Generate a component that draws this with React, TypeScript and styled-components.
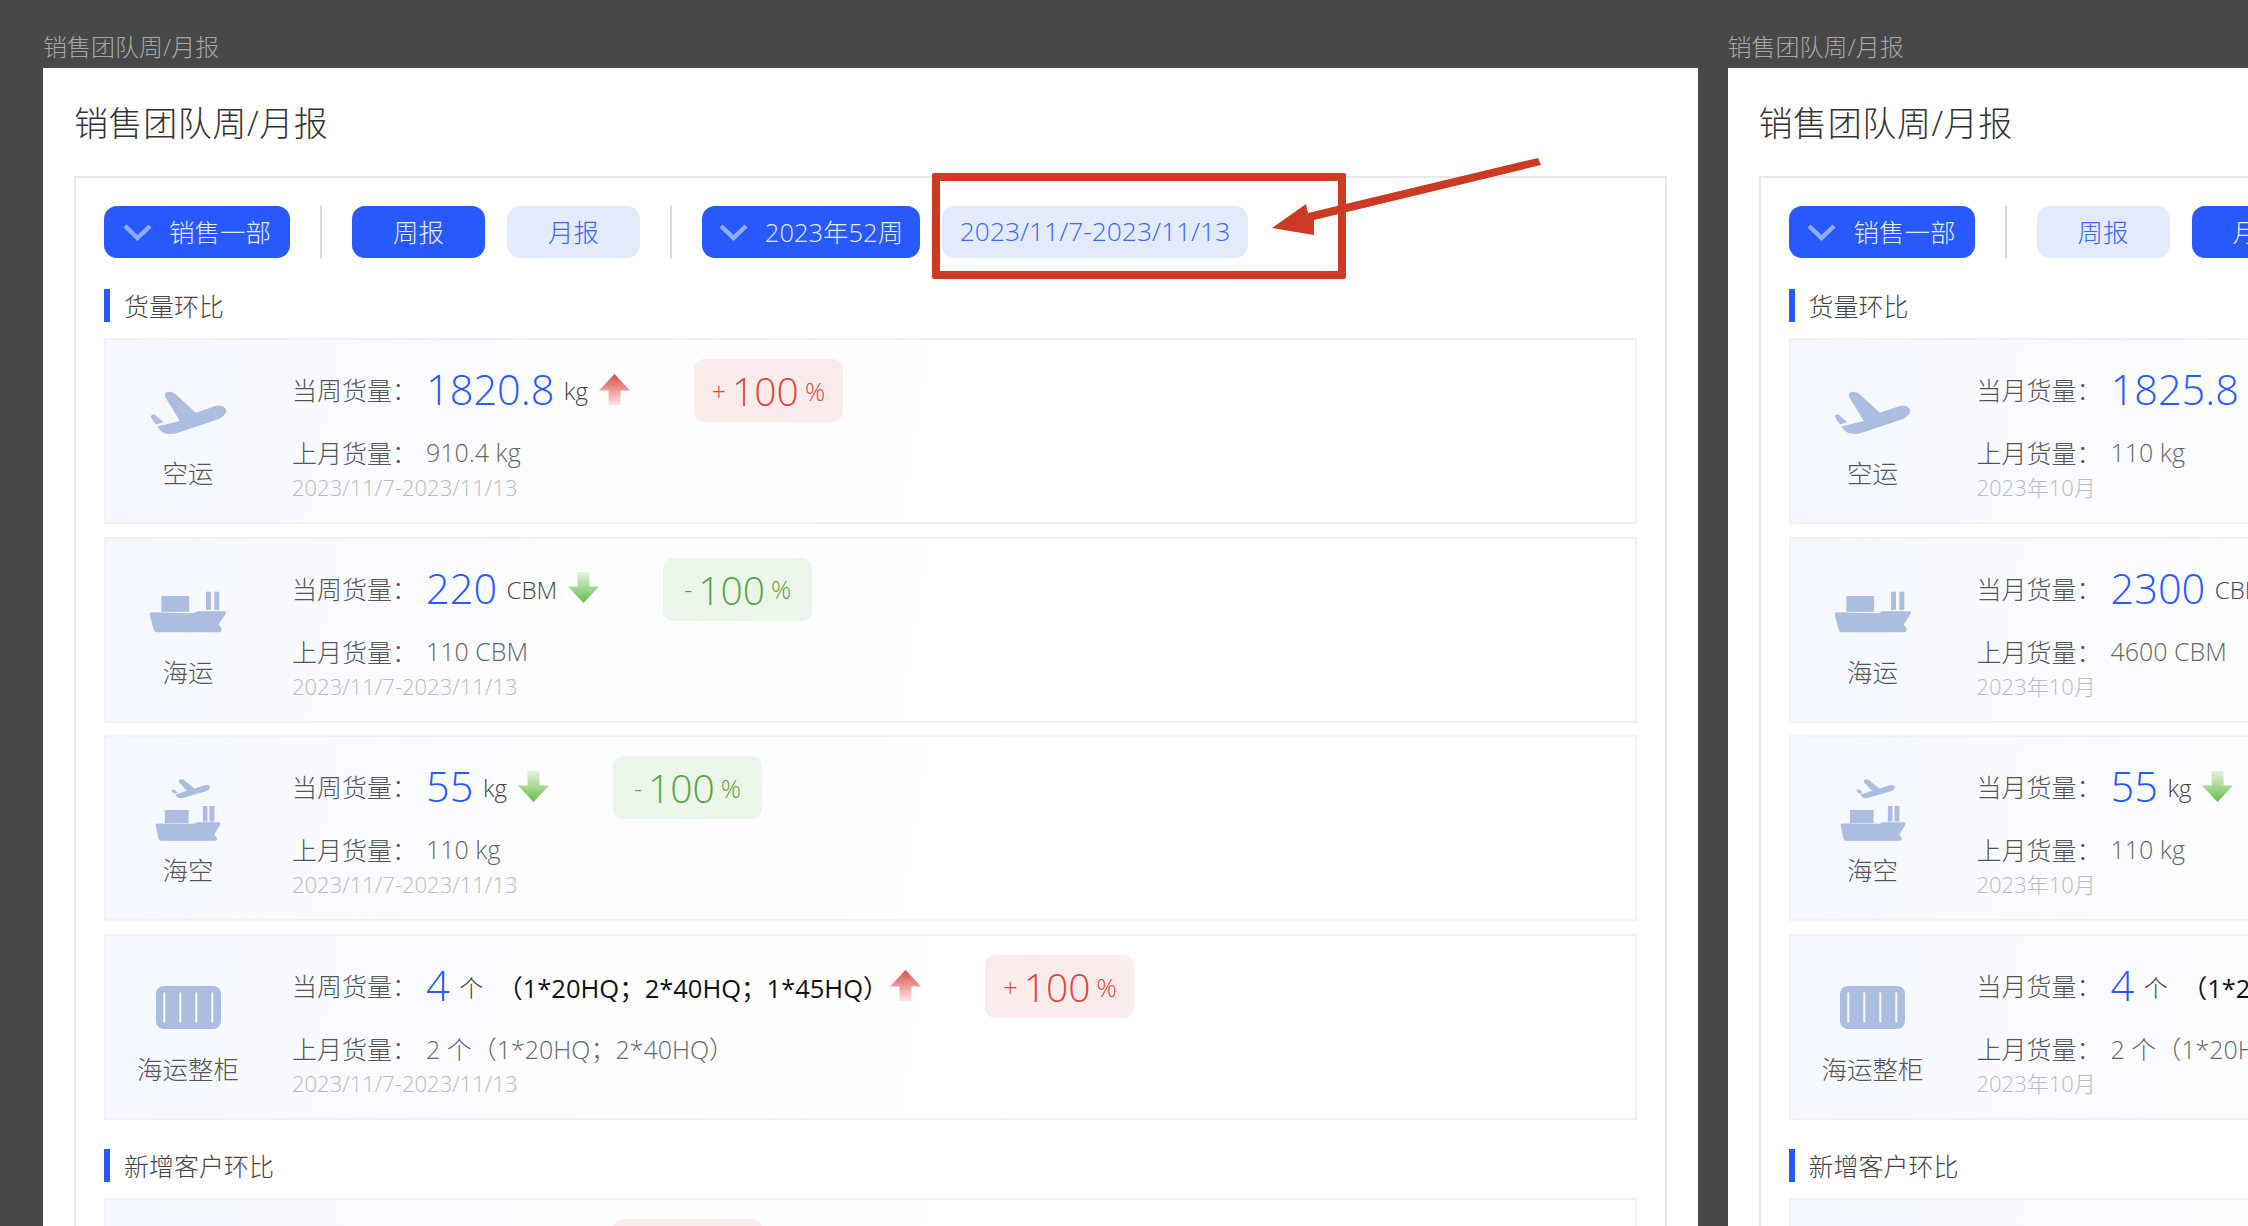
import React from "react";
import styled, { createGlobalStyle } from "styled-components";

const GlobalStyle = createGlobalStyle`
  html, body {
    margin: 0;
    padding: 0;
    background: #484848;
  }
  * {
    box-sizing: border-box;
  }
`;

const FONT = `"Open Sans", "Noto Sans CJK SC", sans-serif`;

const Page = styled.div`
  position: relative;
  display: flex;
  gap: 30px;
  width: 2248px;
  height: 1226px;
  padding-left: 43px;
  overflow: hidden;
  background: #484848;
  font-family: ${FONT};
  font-weight: 300;
`;

const Artboard = styled.section`
  flex: 0 0 1654.5px;
`;

const ArtboardLabel = styled.div`
  height: 68px;
  padding-top: 31px;
  font-size: 24px;
  line-height: 32px;
  color: #a6a6a6;
`;

const Sheet = styled.div`
  min-height: 1158px;
  padding: 28px 31px 0 31px;
  background: #fff;
`;

const SheetTitle = styled.h1`
  margin: 0 0 26px;
  font-size: 34px;
  font-weight: 300;
  line-height: 54px;
  letter-spacing: 0.6px;
  color: #333;
`;

const Frame = styled.div`
  padding: 28px 28px 28px;
  border: 2px solid #e8e8e8;
`;

const Toolbar = styled.div`
  display: flex;
  align-items: center;
  height: 52px;
  margin-bottom: 31px;
`;

const Pill = styled.div<{ $w: number; $on?: boolean; $size?: number }>`
  flex: 0 0 ${(p) => p.$w}px;
  display: flex;
  align-items: center;
  justify-content: center;
  gap: 17px;
  height: 52px;
  margin-right: 22px;
  padding-bottom: 3px;
  border-radius: 13px;
  font-size: ${(p) => p.$size ?? 25.5}px;
  white-space: nowrap;
  background: ${(p) => (p.$on ? "#2759fb" : "#e2eafc")};
  color: ${(p) => (p.$on ? "#e4ebff" : "#3a68f4")};
  svg {
    margin-top: 3px;
  }
`;

const Divider = styled.div`
  flex: 0 0 2px;
  height: 52px;
  margin: 0 30px 0 8px;
  background: #d9d9d9;
`;

const SectionTitle = styled.h2<{ $gap?: number }>`
  display: flex;
  align-items: center;
  height: 33px;
  margin: ${(p) => p.$gap ?? 0}px 0 16px;
  padding: 0 0 2px 14px;
  border-left: 6px solid #2759fb;
  font-size: 25px;
  font-weight: 300;
  color: #444;
`;

const Card = styled.div`
  display: flex;
  height: 186px;
  margin-bottom: 12.7px;
  border: 2px solid #f0f0f6;
  background: linear-gradient(100deg, #f4f7ff 0%, #fcfdff 28%, #fff 60%);
`;

const KindCol = styled.div`
  flex: 0 0 164px;
  margin-right: 22px;
  padding-top: 28px;
  text-align: center;
`;

const KindIcon = styled.div`
  display: flex;
  align-items: center;
  justify-content: center;
  height: 90px;
`;

const KindName = styled.div`
  margin-top: -1px;
  font-size: 25.5px;
  line-height: 32px;
  color: #555;
`;

const Stats = styled.div`
  padding-top: 19px;
`;

const CurrentLine = styled.div`
  display: flex;
  align-items: center;
  height: 63px;
`;

const StatLabel = styled.span`
  flex: 0 0 134px;
  font-size: 25px;
  color: #555;
`;

const CurrentLabel = styled(StatLabel)`
  margin-bottom: 3px;
`;

const BigValue = styled.span`
  margin-bottom: 3px;
  font-size: 41.5px;
  line-height: 50px;
  color: #2759fb;
`;

const Unit = styled.span`
  margin: 0 11px 0 9.5px;
  font-size: 24px;
  color: #444;
`;

const Detail = styled.span`
  margin: 0 2px 0 3px;
  font-size: 25.5px;
  color: #111;
  font-weight: 400;
`;

const Trend = styled.svg`
  flex: none;
  display: block;
  margin-bottom: 3px;
`;

const Change = styled.div<{ $up: boolean }>`
  flex: none;
  display: flex;
  align-items: center;
  justify-content: center;
  gap: 6px;
  width: 149px;
  height: 63px;
  margin-left: 64px;
  border-radius: 10px;
  background: ${(p) => (p.$up ? "#fbecec" : "#ecf5ea")};
  color: ${(p) => (p.$up ? "#e0433c" : "#58a63c")};
  font-size: 39px;
  small {
    font-size: 25px;
  }
`;

const PrevLine = styled.div`
  display: flex;
  align-items: center;
  height: 32px;
  margin-top: 14px;
  font-size: 25px;
  color: #666;
  white-space: nowrap;
`;

const DateLine = styled.div`
  margin-top: 5px;
  font-size: 22px;
  line-height: 28px;
  color: #bbb;
  white-space: nowrap;
`;

const Callout = styled.div`
  position: absolute;
  left: 932px;
  top: 173px;
  width: 414px;
  height: 106px;
  border: 8px solid #cb3a22;
  border-radius: 2px;
`;

const CalloutArrow = styled.svg`
  position: absolute;
  left: 1260px;
  top: 150px;
`;

const ICON = "#abbee2";

const PLANE =
  "M112 197 L180 180 L136 108 Q130 92 150 92 Q160 93 168 100 L228 155 L290 134 Q312 130 320 148 Q320 162 298 174 L172 216 Q150 223 132 216 Q118 208 112 197 Z M92 166 Q96 158 104 161 L130 183 L109 191 Q98 180 92 166 Z";

const Plane = () => (
  <svg width="77" height="44" viewBox="90 90 232 132">
    <path d={PLANE} fill={ICON} />
  </svg>
);

const Ship = () => (
  <svg width="78" height="42" viewBox="85 93 235 127" fill={ICON}>
    <rect x="122" y="108" width="84" height="48" />
    <rect x="257" y="95" width="15" height="55" />
    <rect x="282" y="95" width="15" height="55" />
    <path d="M92 157 L220 160 L231 154 L314 154 Q320 155 317 160 L295 195 L303 203 Q306 218 296 218 L106 218 Q99 216 98 208 L87 165 Q86 158 92 157 Z" />
  </svg>
);

const SeaAir = () => (
  <svg width="66" height="64" viewBox="103 54 200 192" fill={ICON}>
    <path d="M165 103 L200 92 L175 65 Q174 56 184 57 Q190 58 194 62 L222 85 L256 74 Q268 73 270 81 Q268 89 258 93 L190 113 Q178 116 172 112 Q167 108 165 103 Z M153 92 Q156 86 161 88 L172 97 L163 101 Q157 98 153 92 Z" />
    <rect x="133" y="150" width="72" height="40" />
    <rect x="248" y="138" width="14" height="47" />
    <rect x="268" y="138" width="15" height="47" />
    <path d="M110 191 L222 192 L232 187 L298 187 Q303 188 301 193 L283 225 L290 233 Q292 243 284 243 L122 243 Q115 243 113 236 L105 197 Q105 191 110 191 Z" />
  </svg>
);

const Container = () => (
  <svg width="65" height="46" viewBox="105 678 195 138">
    <rect x="105" y="678" width="195" height="129" rx="24" fill={ICON} />
    {[130, 178, 226, 274].map((x) => (
      <rect key={x} x={x - 3} y="697" width="6" height="91" rx="3" fill="#f8faff" />
    ))}
  </svg>
);

const ICONS = {
  plane: <Plane />,
  ship: <Ship />,
  seaair: <SeaAir />,
  container: <Container />,
};

const Chevron = () => (
  <svg width="29" height="17" viewBox="0 0 29 17" fill="none">
    <path d="M2 2 L14.5 14 L27 2" stroke="#8fadff" strokeWidth="4.5" />
  </svg>
);

const ArrowMark = ({ up }: { up: boolean }) => (
  <Trend width="31" height="31" viewBox="0 0 31 31">
    <defs>
      <linearGradient id={up ? "riseFill" : "fallFill"} x1="0" y1="0" x2="0" y2="1">
        <stop offset="0" stopColor={up ? "#dc4a44" : "#e3f4dc"} />
        <stop offset="1" stopColor={up ? "#fbe6e4" : "#66bd47"} />
      </linearGradient>
    </defs>
    <path
      d={
        up
          ? "M15.5 0 L31 16.5 L21.5 16.5 L21.5 31 L9.5 31 L9.5 16.5 L0 16.5 Z"
          : "M15.5 31 L31 14.5 L21.5 14.5 L21.5 0 L9.5 0 L9.5 14.5 L0 14.5 Z"
      }
      fill={`url(#${up ? "riseFill" : "fallFill"})`}
    />
  </Trend>
);

type Row = {
  icon: keyof typeof ICONS;
  name: string;
  value: string;
  unit: string;
  detail?: string;
  up: boolean;
  prev: string;
};

const CARGO = (v: string[], p: string[]): Row[] => [
  { icon: "plane", name: "空运", value: v[0], unit: "kg", up: true, prev: p[0] },
  { icon: "ship", name: "海运", value: v[1], unit: "CBM", up: false, prev: p[1] },
  { icon: "seaair", name: "海空", value: v[2], unit: "kg", up: false, prev: p[2] },
  {
    icon: "container",
    name: "海运整柜",
    value: v[3],
    unit: "个",
    detail: "（1*20HQ；2*40HQ；1*45HQ）",
    up: true,
    prev: p[3],
  },
];

const REPORTS = [
  {
    current: "当周货量：",
    range: "2023/11/7-2023/11/13",
    weekOn: true,
    rows: CARGO(
      ["1820.8", "220", "55", "4"],
      ["910.4 kg", "110 CBM", "110 kg", "2 个（1*20HQ；2*40HQ）"]
    ),
  },
  {
    current: "当月货量：",
    range: "2023年10月",
    weekOn: false,
    rows: CARGO(
      ["1825.8", "2300", "55", "4"],
      ["110 kg", "4600 CBM", "110 kg", "2 个（1*20HQ；2*40HQ）"]
    ),
  },
];

const StatCard = ({ row, current, range }: { row: Row; current: string; range: string }) => (
  <Card>
    <KindCol>
      <KindIcon>{ICONS[row.icon]}</KindIcon>
      <KindName>{row.name}</KindName>
    </KindCol>
    <Stats>
      <CurrentLine>
        <CurrentLabel>{current}</CurrentLabel>
        <BigValue>{row.value}</BigValue>
        <Unit>{row.unit}</Unit>
        {row.detail && <Detail>{row.detail}</Detail>}
        <ArrowMark up={row.up} />
        <Change $up={row.up}>
          <small>{row.up ? "+" : "-"}</small>100<small>%</small>
        </Change>
      </CurrentLine>
      <PrevLine>
        <StatLabel>上月货量：</StatLabel>
        {row.prev}
      </PrevLine>
      <DateLine>{range}</DateLine>
    </Stats>
  </Card>
);

function App() {
  return (
    <Page>
      <GlobalStyle />
      {REPORTS.map((report) => (
        <Artboard key={report.current}>
          <ArtboardLabel>销售团队周/月报</ArtboardLabel>
          <Sheet>
            <SheetTitle>销售团队周/月报</SheetTitle>
            <Frame>
              <Toolbar>
                <Pill $w={186} $on>
                  <Chevron />
                  销售一部
                </Pill>
                <Divider />
                <Pill $w={133} $on={report.weekOn}>
                  周报
                </Pill>
                <Pill $w={133} $on={!report.weekOn}>
                  月报
                </Pill>
                <Divider />
                <Pill $w={218} $on>
                  <Chevron />
                  2023年52周
                </Pill>
                <Pill $w={306} $size={26.4}>
                  2023/11/7-2023/11/13
                </Pill>
              </Toolbar>
              <SectionTitle>货量环比</SectionTitle>
              {report.rows.map((row) => (
                <StatCard key={row.name} row={row} current={report.current} range={report.range} />
              ))}
              <SectionTitle $gap={29}>新增客户环比</SectionTitle>
              <StatCard row={{ ...report.rows[2], up: true }} current={report.current} range={report.range} />
            </Frame>
          </Sheet>
        </Artboard>
      ))}
      <Callout />
      <CalloutArrow width="300" height="100" viewBox="1260 150 300 100">
        <polygon
          points="1538,158 1541,165 1314,220 1314,235 1272,228 1306,204 1308,213"
          fill="#cb3a22"
        />
      </CalloutArrow>
    </Page>
  );
}

export default App;
